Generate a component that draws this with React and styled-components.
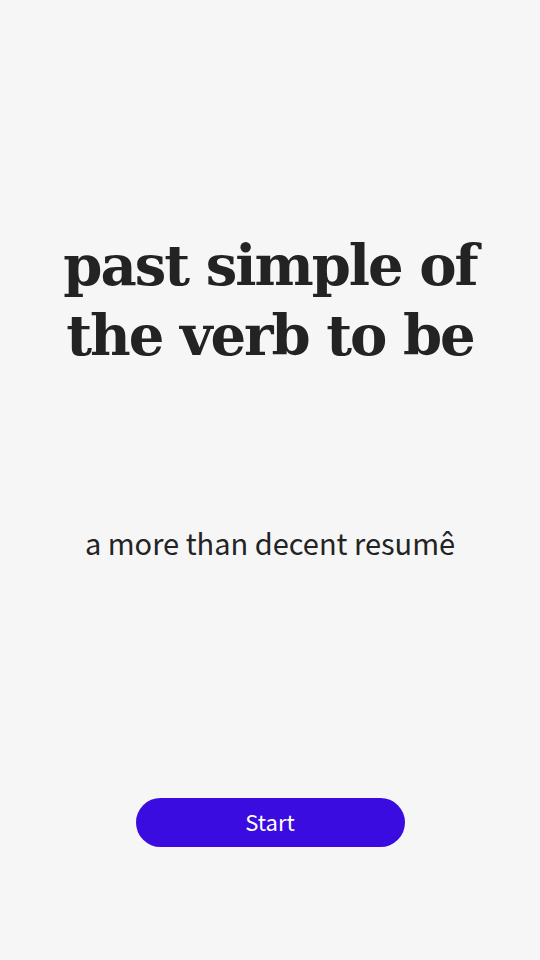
import styled, { createGlobalStyle } from "styled-components";

const GlobalStyle = createGlobalStyle`
  html, body {
    margin: 0;
    padding: 0;
    background: #f6f6f6;
  }
`;

const Screen = styled.main`
  width: 540px;
  min-height: 960px;
  display: flex;
  flex-direction: column;
  align-items: center;
  background: #f6f6f6;
  color: #232323;
`;

const Title = styled.h1`
  margin: 230px 0 0;
  font-family: "DejaVu Serif", "Liberation Serif", serif;
  font-weight: 700;
  font-size: 56px;
  line-height: 70px;
  text-align: center;
  letter-spacing: -2px;
`;

const Subtitle = styled.p`
  margin: 155px 0 0;
  font-family: "Noto Sans CJK SC", "Noto Sans", sans-serif;
  font-size: 29px;
  line-height: 34px;
  text-align: center;
`;

const StartButton = styled.button`
  margin-top: 239px;
  width: 269px;
  height: 49px;
  padding: 0 0 3px;
  border: none;
  border-radius: 25px;
  background: #3a0ce0;
  color: #ffffff;
  font-family: "Noto Sans CJK SC", "Noto Sans", sans-serif;
  font-size: 22px;
  cursor: pointer;
`;

export default function App() {
  return (
    <>
      <GlobalStyle />
      <Screen>
        <Title>
          past simple of
          <br />
          the verb to be
        </Title>
        <Subtitle>a more than decent resumê</Subtitle>
        <StartButton>Start</StartButton>
      </Screen>
    </>
  );
}
